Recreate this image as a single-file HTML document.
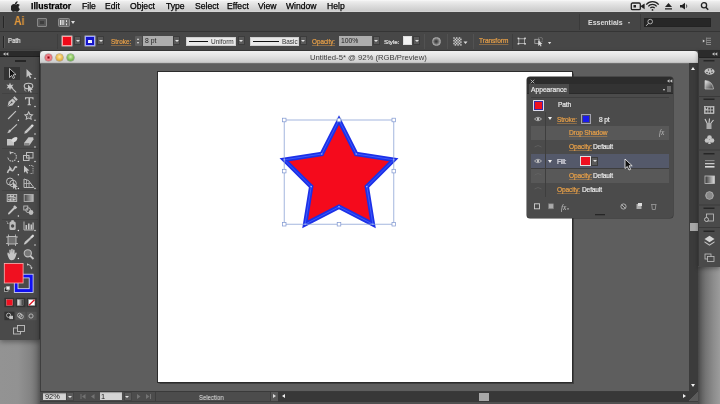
<!DOCTYPE html>
<html><head><meta charset="utf-8">
<style>
*{margin:0;padding:0;box-sizing:border-box}
html,body{width:720px;height:404px;overflow:hidden;background:#8a8a8a;font-family:"Liberation Sans",sans-serif;-webkit-font-smoothing:antialiased}
.a{position:absolute}
.t{position:absolute;white-space:nowrap;will-change:transform}
#menubar{left:0;top:0;width:720px;height:12px;background:linear-gradient(#fafafa 0,#ededed 12%,#dedede 45%,#d0d0d0 80%,#cdcdcd 90%,#d8d8d8 100%)}
.mi{position:absolute;will-change:transform;top:0.8px;font-size:8.6px;line-height:10px;color:#000;-webkit-text-stroke:0.25px #000}
#appbar{left:0;top:12px;width:720px;height:20px;background:#454545;border-bottom:1px solid #353535}
#ctrl{left:0;top:32px;width:720px;height:19px;background:#474747;border-bottom:1px solid #383838}
#desk{left:0;top:12px;width:720px;height:392px;background:#969696}
#tools{left:0;top:50px;width:40px;height:289.5px;background:#4a4a4a;box-shadow:0 2px 5px rgba(0,0,0,0.35)}
#docwin{left:40px;top:51px;width:658px;height:360px;background:#5e5e5e;box-shadow:0 3px 6px 0 rgba(0,0,0,0.4)}
#dock{left:698px;top:50px;width:22px;height:216.7px;background:#4a4a4a;box-shadow:0 2px 4px rgba(0,0,0,0.3)}
.dd{position:absolute;width:7px;height:9px;background:#5a5a5a;border:1px solid #3c3c3c}
.dd:after{content:"";position:absolute;left:0.5px;top:2.8px;border-left:2px solid transparent;border-right:2px solid transparent;border-top:2.5px solid #e0e0e0}
.ct.ot{color:#e8a048;text-decoration:underline;text-underline-offset:1px;text-decoration-thickness:0.6px;text-decoration-color:rgba(220,150,70,0.45)}
.ct{font-size:6.6px;line-height:8px;color:#e4e4e4;-webkit-text-stroke:0.2px}
.sep{position:absolute;width:1px;background:#3a3a3a;border-right:1px solid #525252}
</style></head><body>
<div class="a" id="desk"></div>
<div class="a" style="left:698px;top:50px;width:22px;height:354px;background:linear-gradient(90deg,#585858,#747474 35%,#8c8c8c 70%,#9c9c9c)"></div>
<div class="a" style="left:0;top:339px;width:40px;height:65px;background:linear-gradient(90deg,#939393,#929292 45%,#848484 75%,#6a6a6a)"></div>

<!-- MENU BAR -->
<div class="a" id="menubar">
  <svg class="a" style="left:11px;top:1px" width="10" height="11" viewBox="0 0 10 11"><path d="M6.6 0.3c0.1 0.9-0.3 1.7-0.8 2.2-0.5 0.5-1.2 0.9-1.9 0.8-0.1-0.8 0.3-1.6 0.8-2.1 0.5-0.5 1.3-0.9 1.9-0.9zM8.9 7.9c-0.3 0.7-0.5 1-0.9 1.6-0.5 0.8-1.3 1.4-2.1 1.3-0.7 0-0.9-0.4-1.8-0.4-0.9 0-1.1 0.4-1.8 0.4-0.8 0-1.5-0.7-2-1.5C-0.8 7.4-0.3 4.7 1 3.7c0.6-0.5 1.4-0.7 2-0.7 0.8 0 1.3 0.5 1.9 0.5 0.6 0 1-0.5 1.9-0.5 0.6 0 1.4 0.3 2 1-1.7 0.9-1.5 3.4 0.1 3.9z" fill="#222"/></svg>
  <div class="mi" style="left:30.5px;font-weight:bold;font-size:8.7px">Illustrator</div>
  <div class="mi" style="left:82px">File</div>
  <div class="mi" style="left:105px">Edit</div>
  <div class="mi" style="left:130px">Object</div>
  <div class="mi" style="left:165.5px">Type</div>
  <div class="mi" style="left:194.5px">Select</div>
  <div class="mi" style="left:226.5px">Effect</div>
  <div class="mi" style="left:258px">View</div>
  <div class="mi" style="left:286px">Window</div>
  <div class="mi" style="left:326.5px">Help</div>
  <!-- status icons -->
  <svg class="a" style="left:630px;top:1px" width="80" height="10" viewBox="0 0 80 10">
    <rect x="1.3" y="2" width="9" height="6.6" rx="1.2" fill="none" stroke="#222" stroke-width="1.3"/>
    <rect x="3.5" y="4" width="2.5" height="2.5" fill="#222"/>
    <path d="M10.3 5.3 L14.6 2.4 V8.2 Z" fill="#222"/>
    <path d="M16.3 3.6 A8 8 0 0 1 28.7 3.6" fill="none" stroke="#222" stroke-width="1.3"/>
    <path d="M18.3 5.4 A5.3 5.3 0 0 1 26.7 5.4" fill="none" stroke="#222" stroke-width="1.3"/>
    <path d="M20.3 7.1 A2.8 2.8 0 0 1 24.7 7.1" fill="none" stroke="#222" stroke-width="1.3"/>
    <circle cx="22.5" cy="8.9" r="0.9" fill="#222"/>
    <path d="M35 6 L38.5 2 L42 6 Z M35 7.2 H42 V8.4 H35 Z" fill="#222"/>
    <path d="M50 4 H52 L55 1.8 V8.4 L52 6.4 H50 Z" fill="#222"/><path d="M56.3 3.5 Q57.3 5.1 56.3 6.7" fill="none" stroke="#222" stroke-width="0.8"/>
    <circle cx="74" cy="4.3" r="2.6" fill="none" stroke="#222" stroke-width="1.3"/>
    <path d="M75.8 6.2 L78.2 8.7" stroke="#222" stroke-width="1.5"/>
  </svg>
</div>

<!-- APP BAR -->
<div class="a" id="appbar">
  <div class="a" style="left:3px;top:4px;width:2px;height:12px;background:#262626;border-right:1px solid #4a4a4a"></div>
  <div class="t" style="left:14px;top:3.4px;font-size:12.2px;line-height:13px;font-weight:bold;color:#e3983a;transform:scaleX(0.86);transform-origin:0 0">Ai</div>
  <div class="a" style="left:36.8px;top:5.8px;width:9.8px;height:9.2px;background:#555;border:1.2px solid #888;border-radius:1px;box-shadow:inset 0 0 1px #777"></div><div class="a" style="left:39.5px;top:8.5px;width:4px;height:3.5px;background:#3e3e3e"></div>
  <div class="a" style="left:58.4px;top:5.8px;width:11.3px;height:9.2px;background:#6a6a6a;border:1.2px solid #8c8c8c;border-radius:1.5px"></div>
  <div class="a" style="left:60.3px;top:7.5px;width:0.9px;height:5.5px;background:#e8e8e8;box-shadow:1.6px 0 #e8e8e8,3.2px 0 #ccc"></div><div class="a" style="left:65.5px;top:7.8px;width:1.8px;height:1.8px;background:#e8e8e8;border-radius:50%;box-shadow:0 3.2px #e8e8e8"></div>
  <div class="a" style="left:71px;top:9px;border-left:2px solid transparent;border-right:2px solid transparent;border-top:3px solid #ddd"></div>
  <div class="a" style="left:579px;top:2px;width:1px;height:16px;background:#3a3a3a"></div>
  <div class="t" style="left:587.5px;top:5.8px;font-size:7px;line-height:9px;font-weight:bold;color:#dcdcdc">Essentials</div>
  <div class="a" style="left:628px;top:9.5px;border-left:1.5px solid transparent;border-right:1.5px solid transparent;border-top:2px solid #ccc"></div>
  <div class="a" style="left:640px;top:2px;width:1px;height:16px;background:#3a3a3a"></div>
  <div class="a" style="left:644px;top:5.7px;width:67px;height:9.5px;background:#272727;border:1px solid #232323"></div>
  <svg class="a" style="left:645px;top:6px" width="9" height="9" viewBox="0 0 9 9"><circle cx="5.2" cy="3.6" r="2.3" fill="none" stroke="#bbb" stroke-width="0.9"/><path d="M3.6 5.2 L1.2 7.8" stroke="#bbb" stroke-width="1"/></svg>
</div>

<!-- CONTROL BAR -->
<div class="a" id="ctrl">
  <div class="a" style="left:3px;top:3.5px;width:2px;height:12px;background:#262626;border-right:1px solid #555"></div>
  <div class="t ct" style="left:7.8px;top:5px;font-size:6.7px;transform:scaleX(0.9);transform-origin:0 0">Path</div>
  <div class="a" style="left:57px;top:2px;width:1px;height:15px;background:#3e3e3e"></div>
  <div class="a" style="left:62px;top:4.3px;width:10px;height:10px;background:#f00818;border:0.9px solid #ffa0a0;box-shadow:0 0 0 0.4px #ddd"></div>
  <div class="dd" style="left:74px;top:4.2px"></div>
  <div class="a" style="left:85px;top:4.3px;width:10px;height:10px;background:#1414c8;border:0.9px solid #a0a8ff;box-shadow:0 0 0 0.4px #ccc"></div>
  <div class="a" style="left:88.2px;top:7.5px;width:3.6px;height:3.6px;background:#e8ecff;border:0.5px dotted #fff;border-radius:0.5px"></div>
  <div class="dd" style="left:97px;top:4.2px"></div>
  <div class="t ct ot" style="left:111px;top:5.5px;font-size:6.4px">Stroke:</div>
  <div class="a" style="left:135px;top:4.3px;width:7px;height:4.5px;background:#5c5c5c;border-radius:1px"></div>
  <div class="a" style="left:135px;top:9.2px;width:7px;height:4.5px;background:#5c5c5c;border-radius:1px"></div>
  <div class="a" style="left:136.6px;top:5.5px;border-left:1.9px solid transparent;border-right:1.9px solid transparent;border-bottom:2.2px solid #e0e0e0"></div>
  <div class="a" style="left:136.6px;top:10.3px;border-left:1.9px solid transparent;border-right:1.9px solid transparent;border-top:2.2px solid #e0e0e0"></div>
  <div class="a" style="left:143px;top:4.2px;width:29.5px;height:9.5px;background:#adadad"></div>
  <div class="t ct" style="left:145px;top:5.3px;color:#222;font-size:6.8px;-webkit-text-stroke:0">8 pt</div>
  <div class="dd" style="left:173px;top:4.2px"></div>
  <div class="a" style="left:186px;top:4.7px;width:50px;height:9.2px;background:#e8e8e8;border:0.5px solid #cfcfcf"></div>
  <div class="a" style="left:189px;top:8.6px;width:19px;height:1.5px;background:#111"></div>
  <div class="t ct" style="left:210.8px;top:5.6px;color:#333;font-size:6.5px;-webkit-text-stroke:0">Uniform</div>
  <div class="dd" style="left:237.5px;top:4.2px"></div>
  <div class="a" style="left:250px;top:4.7px;width:48.5px;height:9.2px;background:#e8e8e8;border:0.5px solid #cfcfcf"></div>
  <div class="a" style="left:253px;top:8.6px;width:26px;height:1.5px;background:#111"></div>
  <div class="t ct" style="left:281.7px;top:5.6px;color:#333;font-size:6.4px;-webkit-text-stroke:0">Basic</div>
  <div class="dd" style="left:299.5px;top:4.2px"></div>
  <div class="t ct ot" style="left:311.5px;top:5.5px;font-size:6.3px">Opacity:</div>
  <div class="a" style="left:339px;top:4.2px;width:33px;height:9.5px;background:#adadad"></div>
  <div class="t ct" style="left:340.5px;top:5.3px;color:#222;font-size:6.8px;-webkit-text-stroke:0">100%</div>
  <div class="dd" style="left:372.5px;top:4.2px"></div>
  <div class="t ct" style="left:384px;top:5.5px;color:#e0e0e0;font-size:6.2px">Style:</div>
  <div class="a" style="left:402.5px;top:4.2px;width:9.5px;height:9.3px;background:#f2f2f2;border:0.6px solid #ddd"></div>
  <div class="dd" style="left:413px;top:4.2px"></div>
  <div class="sep" style="left:424px;top:2px;height:15px"></div>
  <div class="a" style="left:431.8px;top:4.8px;width:8.8px;height:8.8px;border-radius:50%;background:radial-gradient(circle at 45% 50%,#333 0,#555 30%,#999 70%,#777);border:0.8px solid #aaa"></div>
  <div class="sep" style="left:447px;top:2px;height:15px"></div>
  <svg class="a" style="left:453px;top:4.5px" width="16" height="10" viewBox="0 0 16 10"><rect x="0.3" y="0.3" width="8.4" height="8.4" fill="#555"/><g fill="#d0d0d0"><rect x="0.3" y="0.3" width="1.4" height="1.4"/><rect x="3" y="0.3" width="1.4" height="1.4"/><rect x="5.8" y="0.3" width="1.4" height="1.4"/><rect x="1.7" y="1.7" width="1.4" height="1.4"/><rect x="4.4" y="1.7" width="1.4" height="1.4"/><rect x="7.2" y="1.7" width="1.4" height="1.4"/><rect x="0.3" y="3" width="1.4" height="1.4"/><rect x="3" y="3" width="1.4" height="1.4"/><rect x="5.8" y="3" width="1.4" height="1.4"/><rect x="1.7" y="4.4" width="1.4" height="1.4"/><rect x="4.4" y="4.4" width="1.4" height="1.4"/><rect x="7.2" y="4.4" width="1.4" height="1.4"/><rect x="0.3" y="5.8" width="1.4" height="1.4"/><rect x="3" y="5.8" width="1.4" height="1.4"/><rect x="5.8" y="5.8" width="1.4" height="1.4"/><rect x="1.7" y="7.2" width="1.4" height="1.4"/><rect x="4.4" y="7.2" width="1.4" height="1.4"/><rect x="7.2" y="7.2" width="1.4" height="1.4"/></g><path d="M10.5 4.5 L14.5 4.5 L12.5 7Z" fill="#ddd"/></svg>
  <div class="sep" style="left:473px;top:2px;height:15px"></div>
  <div class="t ct ot" style="left:478.5px;top:5.2px;font-size:6.5px">Transform</div>
  <div class="a" style="left:511.5px;top:2px;width:1px;height:15px;background:#3e3e3e"></div>
  <svg class="a" style="left:517px;top:4.5px" width="10" height="9" viewBox="0 0 10 9"><rect x="1.8" y="1.8" width="5.8" height="4.6" fill="none" stroke="#bbb" stroke-width="0.8"/><g fill="#ddd"><rect x="0.6" y="0.6" width="1.6" height="1.6"/><rect x="7.2" y="0.6" width="1.6" height="1.6"/><rect x="0.6" y="6" width="1.6" height="1.6"/><rect x="7.2" y="6" width="1.6" height="1.6"/></g></svg>
  <svg class="a" style="left:534px;top:4.5px" width="18" height="10" viewBox="0 0 18 10"><rect x="0.8" y="2.3" width="4.5" height="4.2" fill="none" stroke="#aaa" stroke-width="0.8"/><rect x="4.5" y="0.6" width="3.8" height="3.8" fill="none" stroke="#999" stroke-width="0.7" stroke-dasharray="0.8 0.6"/><path d="M4.2 3.2 L4.2 9 L5.6 7.7 L6.7 9.6 L7.6 9.1 L6.6 7.2 L8.5 7.1Z" fill="#d8d8d8"/><path d="M14 5 L17.2 5 L15.6 7.2Z" fill="#e0e0e0"/></svg>
  <svg class="a" style="left:702px;top:3.6px" width="10" height="10" viewBox="0 0 10 10"><path d="M0.8 3.6 L3 5 L0.8 6.4Z" fill="#d0d0d0"/><rect x="4.5" y="1.8" width="4.5" height="0.7" fill="#aaa"/><rect x="4.5" y="3.9" width="4.5" height="0.7" fill="#aaa"/><rect x="4.5" y="6" width="4.5" height="0.7" fill="#aaa"/><rect x="4.5" y="8.1" width="4.5" height="0.7" fill="#aaa"/><rect x="4.2" y="1.5" width="0.6" height="7.5" fill="#999"/></svg>
</div>


<!-- TOOLS PANEL -->
<div class="a" id="tools">
  <div class="a" style="left:0;top:0;width:40px;height:1.2px;background:#474747"></div><div class="a" style="left:0;top:1.2px;width:40px;height:6.3px;background:#2b2b2b;border-bottom:1px solid #1f1f1f"></div>
  <svg class="a" style="left:2.5px;top:2px" width="6" height="4" viewBox="0 0 6 4"><path d="M0 2 L2.5 0.3 V3.7Z M2.8 2 L5.3 0.3 V3.7Z" fill="#c0c0c0"/></svg>
  <div class="a" style="left:39px;top:7px;width:1px;height:282px;background:#383838"></div>
  <div class="a" style="left:14.5px;top:10px;width:11px;height:1.6px;background:#262626"></div>
  <div class="a" style="left:4px;top:17px;width:16px;height:13px;background:#343434"></div>
  <div class="a" style="left:2px;top:43px;width:36px;height:1px;background:#424242"></div>
  <div class="a" style="left:2px;top:98px;width:36px;height:1px;background:#424242"></div>
  <div class="a" style="left:2px;top:140px;width:36px;height:1px;background:#424242"></div>
  <div class="a" style="left:2px;top:168.5px;width:36px;height:1px;background:#424242"></div>
  <svg class="a" style="left:0;top:0" width="40" height="289" viewBox="0 50 40 289">
   <g fill="#c4c4c4" stroke="none">
    <!-- selection -->
    <path d="M9.5 68.5 L9.5 77.5 L11.7 75.4 L13.2 78.5 L14.6 77.8 L13.1 74.8 L16 74.6Z" fill="#111" stroke="#d8d8d8" stroke-width="0.8"/>
    <!-- direct selection -->
    <path d="M26.5 69 L26.5 77.5 L28.5 75.6 L30 78.5 L31.3 77.8 L29.9 75 L32.5 74.8Z"/>
    <!-- magic wand -->
    <path d="M10 82.5 L11 85 L13.5 84.5 L12 86.5 L13.5 88.5 L11 88 L10 90.5 L9 88 L6.5 88.5 L8 86.5 L6.5 84.5 L9 85Z"/>
    <path d="M11.5 87 L16.5 92 L15.8 92.7 L10.8 87.7Z"/>
    <!-- lasso -->
    <ellipse cx="28.5" cy="86" rx="4.3" ry="2.8" fill="none" stroke="#c4c4c4" stroke-width="1.1"/>
    <path d="M28 84.5 L28 92 L29.5 90.5 L30.7 92.8 L31.8 92.2 L30.7 90 L32.8 89.8Z"/>
    <path d="M25 88 Q24 90.5 26 91.5" fill="none" stroke="#c4c4c4" stroke-width="0.9"/>
    <!-- pen -->
    <path d="M7.6 106.4 L8.6 101.8 L12.6 98.6 L15.6 101.6 L12.4 105.6Z"/>
    <path d="M13 97.8 L14.6 96.2 L17.8 99.4 L16.2 101Z"/>
    <path d="M7.8 106.2 L11.2 102.8" stroke="#4a4a4a" stroke-width="0.6"/>
    <circle cx="11.6" cy="102.4" r="0.9" fill="#4a4a4a"/>
    <!-- type T -->
    <path d="M25 97.2 H33.5 V99.5 H32.8 Q32.6 98.3 31.6 98.3 H30 V104 L31 104.5 V105.2 H27.5 V104.5 L28.5 104 V98.3 H27 Q25.9 98.3 25.7 99.5 H25Z"/>
    <!-- line -->
    <path d="M15.5 110.8 L16.3 111.6 L8.5 119.4 L7.7 118.6Z"/>
    <!-- star -->
    <path d="M28.7 110.8 L30.3 114 L33.6 114.4 L31.2 116.8 L31.8 120 L28.7 118.5 L25.6 120 L26.2 116.8 L23.8 114.4 L27.1 114Z"/>
    <path d="M28.7 113 L29.6 115 L31.6 115.2 L30.1 116.6 L30.5 118.4 L28.7 117.4 L26.9 118.4 L27.3 116.6 L25.8 115.2 L27.8 115Z" fill="#5a5a5a"/>
    <!-- brush -->
    <path d="M16.5 124 L17.3 124.8 L11.5 130.3 L10.7 129.5Z"/>
    <path d="M10.5 129.5 L11.5 130.5 Q10.5 133 7 133.2 Q8.5 132 8.5 130.8 Q9 129.5 10.5 129.5Z"/>
    <!-- pencil -->
    <path d="M31.5 124.8 L33.2 126.5 L26.8 132.9 L24.2 133.8 L25.1 131.2Z"/>
    <circle cx="32.3" cy="125.6" r="1.2" fill="#e0e0e0"/>
    <!-- blob brush -->
    <path d="M7 139 L11 139 L14 141 L14 145.5 L7 145.5Z"/>
    <path d="M11 140.5 Q12.5 137 16.5 137 L17.5 138 Q17 141.5 13.5 142.5Z" fill="#dadada"/>
    <!-- eraser -->
    <path d="M28.5 137.2 L33.2 137.2 L33.5 139.5 L29.5 145.3 L24.2 145.3 L24 143Z"/>
    <path d="M24.2 143 L29.3 143 L29.5 145.3 L24.2 145.3Z" fill="#888"/>
    <!-- rotate -->
    <path d="M12 152.5 A4.3 4.3 0 1 1 7.8 157" fill="none" stroke="#bdbdbd" stroke-width="1.1" stroke-dasharray="1.6 0.8"/>
    <path d="M9.5 151.2 L12.5 152.5 L10 154.5Z"/>
    <!-- scale -->
    <rect x="23.5" y="155.5" width="5.5" height="5" fill="none" stroke="#bdbdbd" stroke-width="1"/>
    <rect x="26.5" y="152.5" width="6.5" height="5.5" fill="none" stroke="#bdbdbd" stroke-width="1"/>
    <!-- warp -->
    <path d="M7.5 173 Q9 168 11 170 Q13 172 14.5 168 Q15.5 166 17 167.5" fill="none" stroke="#c4c4c4" stroke-width="1.6"/>
    <path d="M9 165.5 L12 169 L9.5 171Z"/>
    <!-- free transform -->
    <path d="M24 165.5 L24 172.8 L25.8 171.2 L27 173.7 L28.2 173.1 L27.1 170.7 L29.4 170.6Z"/>
    <path d="M29 165.5 H33 V173.5 H29.5" fill="none" stroke="#bdbdbd" stroke-width="0.9" stroke-dasharray="1.2 1"/>
    <!-- shape builder -->
    <circle cx="10" cy="181.5" r="3.5" fill="none" stroke="#bdbdbd" stroke-width="1"/>
    <circle cx="13" cy="183.5" r="3.3" fill="none" stroke="#bdbdbd" stroke-width="1"/>
    <path d="M13 182 L13 189 L14.6 187.6 L15.7 189.8 L16.8 189.2 L15.8 187 L17.8 186.9Z"/>
    <!-- perspective grid -->
    <path d="M24 179 L28.5 180.5 L33.8 187.5 L24 187.5Z" fill="none" stroke="#bdbdbd" stroke-width="1"/>
    <path d="M26.5 179.8 V187.5 M29 181.5 V187.5 M24 183.5 H31" fill="none" stroke="#bdbdbd" stroke-width="0.8"/>
    <!-- mesh -->
    <rect x="7.2" y="194.5" width="9.5" height="7" fill="#666" stroke="#c0c0c0" stroke-width="0.9"/>
    <path d="M8 197 Q12 195 16 198 M8 199.5 Q12 201 16 199 M10.5 195 Q12 198 10 201 M13.5 195 Q12 198 14 201" fill="none" stroke="#d8d8d8" stroke-width="0.8"/>
    <!-- gradient -->
    <rect x="24.2" y="194.5" width="9" height="7" fill="url(#gr)" stroke="#b0b0b0" stroke-width="0.9"/>
    <!-- eyedropper -->
    <path d="M15.8 206.2 L17.2 207.6 L15.6 209.2 L15.1 208.7 L10 213.8 Q9 214.8 8.2 214.2 Q7.6 213.4 8.6 212.4 L13.7 207.3 L13.2 206.8 L14.8 205.2Z"/>
    <!-- blend -->
    <rect x="23.8" y="206" width="4" height="4" fill="none" stroke="#bdbdbd" stroke-width="0.9"/>
    <circle cx="28.2" cy="210.2" r="2.4" fill="none" stroke="#bdbdbd" stroke-width="0.9"/>
    <circle cx="31" cy="212.5" r="2.4" fill="#bdbdbd"/>
    <!-- symbol sprayer -->
    <rect x="9.5" y="221.5" width="6.2" height="8.5" rx="1.5" fill="#bdbdbd"/>
    <circle cx="12.6" cy="226" r="1.7" fill="#4a4a4a"/>
    <rect x="11.3" y="220.3" width="2.5" height="1.5" fill="#cfcfcf"/>
    <path d="M6.5 221.5 L8 222.5 M7 223.5 H8.5" stroke="#bdbdbd" stroke-width="0.7"/>
    <!-- column graph -->
    <path d="M24 221.5 V230 H33.5" fill="none" stroke="#bdbdbd" stroke-width="0.9"/>
    <rect x="25.5" y="225" width="1.6" height="4.5"/><rect x="28" y="223.5" width="1.6" height="6"/><rect x="30.5" y="224.5" width="1.6" height="5"/><rect x="32.5" y="222.5" width="1.2" height="7"/>
    <!-- artboard -->
    <rect x="8" y="236.5" width="8" height="7.5" fill="#707070" stroke="#c4c4c4" stroke-width="0.9"/>
    <path d="M6 237 H8 M16 237 H18 M6 243.5 H8 M16 243.5 H18 M8.5 234.5 V236.5 M15.5 234.5 V236.5 M8.5 244 V246 M15.5 244 V246" stroke="#c4c4c4" stroke-width="0.8"/>
    <!-- slice -->
    <path d="M33 234.5 L34 236 L27 243 Q25.5 244.5 23.8 244.5 Q24.2 242.5 25.5 241.3Z"/>
    <path d="M30.5 236.5 L33 234.5 L34 236 L31.8 238.2Z" fill="#dcdcdc"/>
    <g transform="translate(0,1.8)"><!-- hand -->
    <path d="M7.5 253 Q7 251 8 250.5 L9.5 252.5 L9.3 248.2 Q10 247.3 10.7 248.2 L11 251.5 L11.2 247.3 Q12 246.5 12.7 247.3 L12.8 251.5 L13.2 248 Q14 247.3 14.6 248.2 L14.6 252.5 L15.6 250.8 Q16.5 250.5 16.8 251.3 L15.6 255 Q14.5 258.5 11.5 258.5 Q9 258.5 7.5 253Z"/>
    <!-- zoom -->
    <circle cx="27.8" cy="251.5" r="3.6" fill="#777" stroke="#bdbdbd" stroke-width="1.1"/>
    <path d="M30.3 254 L33.5 257.2" stroke="#c8c8c8" stroke-width="1.8"/>
    </g>
    <!-- corner dots -->
    <g fill="#e8e8e8">
     <circle cx="35" cy="78.6" r="0.75"/><circle cx="18.4" cy="106.6" r="0.75"/><circle cx="35" cy="106.6" r="0.75"/>
     <circle cx="18.4" cy="120.3" r="0.75"/><circle cx="35" cy="120.3" r="0.75"/><circle cx="35" cy="134" r="0.75"/>
     <circle cx="35" cy="147" r="0.75"/><circle cx="18.4" cy="161.5" r="0.75"/><circle cx="35" cy="161.5" r="0.75"/>
     <circle cx="18.4" cy="174.8" r="0.75"/><circle cx="18.4" cy="188.5" r="0.75"/><circle cx="35" cy="188.5" r="0.75"/>
     <circle cx="18.4" cy="216" r="0.75"/><circle cx="18.4" cy="230.5" r="0.75"/><circle cx="35" cy="230.5" r="0.75"/>
     <circle cx="35" cy="245" r="0.75"/><circle cx="18.4" cy="258.5" r="0.75"/>
    </g>
   </g>
   <defs><linearGradient id="gr" x1="0" x2="1"><stop offset="0" stop-color="#444"/><stop offset="1" stop-color="#bbb"/></linearGradient>
   <linearGradient id="gr2" x1="0" x2="1"><stop offset="0" stop-color="#fff"/><stop offset="1" stop-color="#222"/></linearGradient></defs>
   <!-- fill/stroke -->
   <rect x="14.3" y="274.2" width="18.8" height="18.2" fill="#1010f0" stroke="#dde0ff" stroke-width="0.8"/>
   <rect x="18" y="277.9" width="11.2" height="10.8" fill="#4a4a4a" stroke="#dde0ff" stroke-width="0.8"/>
   <rect x="4.3" y="263.5" width="18.8" height="19.5" fill="#f01020" stroke="#ffb0b0" stroke-width="0.8"/>
   <path d="M28 264.5 Q31.5 264.5 31.5 268.5" fill="none" stroke="#c8c8c8" stroke-width="0.9"/>
   <path d="M27 263.3 L29 264.5 L27 265.8Z M30.3 267.5 L31.5 269.5 L32.7 267.5Z" fill="#c8c8c8"/>
   <rect x="4.5" y="288" width="3.5" height="3.5" fill="#222" stroke="#ddd" stroke-width="0.6"/>
   <rect x="6.3" y="286.3" width="3.5" height="3.5" fill="#eee" stroke="#999" stroke-width="0.5"/>
   <!-- color mode buttons -->
   <rect x="4.4" y="297.8" width="10" height="9.4" fill="#333"/>
   <rect x="15.5" y="297.8" width="10" height="9.4" fill="#333"/>
   <rect x="26.7" y="297.8" width="10" height="9.4" fill="#333"/>
   <rect x="6.3" y="299.5" width="6.4" height="6" fill="#f01020" stroke="#e0a0a0" stroke-width="0.4"/>
   <rect x="17.3" y="299.5" width="6.4" height="6" fill="url(#gr2)" stroke="#999" stroke-width="0.4"/>
   <rect x="28.5" y="299.5" width="6.4" height="6" fill="#fff" stroke="#999" stroke-width="0.4"/>
   <path d="M29 305.2 L34.5 299.8" stroke="#e01020" stroke-width="1.2"/>
   <!-- draw modes -->
   <rect x="4.4" y="311.7" width="10" height="8.5" fill="#333"/>
   <rect x="15.5" y="311.7" width="10" height="8.5" fill="#555"/>
   <rect x="26.7" y="311.7" width="10" height="8.5" fill="#555"/>
   <g fill="none" stroke="#c8c8c8" stroke-width="0.8">
    <circle cx="8.6" cy="315.3" r="2.1"/><rect x="9.8" y="316.2" width="2.8" height="2.5" fill="#c8c8c8"/>
    <circle cx="19.6" cy="315.3" r="2.1"/><circle cx="21.2" cy="316.6" r="2.1"/>
    <circle cx="31" cy="316" r="2.1"/>
   </g>
   <!-- screen mode -->
   <rect x="13.5" y="328" width="7" height="6" fill="none" stroke="#c0c0c0" stroke-width="0.9"/>
   <rect x="17.5" y="325.5" width="7" height="6" fill="#4a4a4a" stroke="#c0c0c0" stroke-width="0.9"/>
  </svg>
</div>


<!-- DOCUMENT WINDOW -->
<div class="a" id="docwin">
  <div class="a" style="left:0;top:0;width:658px;height:12.6px;background:linear-gradient(#f0f0f0,#e4e4e4 40%,#cfcfcf 90%,#b8b8b8);border-radius:4px 4px 0 0;border-bottom:0.6px solid #707070"></div>
  <div class="a" style="left:5px;top:2.5px;width:7px;height:7px;border-radius:50%;background:radial-gradient(circle at 50% 50%,#8a0010 0,#b02030 14%,#f08a90 40%,#e06068 70%,#b84850);box-shadow:0 0 0 0.5px #a08080"></div>
  <div class="a" style="left:16px;top:2.5px;width:7px;height:7px;border-radius:50%;background:radial-gradient(circle at 50% 40%,#ffe8a8,#e8b848 55%,#b08030);box-shadow:0 0 0 0.5px #a08a60"></div>
  <div class="a" style="left:27px;top:2.5px;width:7px;height:7px;border-radius:50%;background:radial-gradient(circle at 50% 40%,#d0f0b0,#80c058 55%,#508838);box-shadow:0 0 0 0.5px #70906a"></div>
  <div class="t" style="left:269.5px;top:1.6px;font-size:7.7px;line-height:9px;color:#3c3c3c">Untitled-5* @ 92% (RGB/Preview)</div>
  <div class="a" style="left:0;top:12.6px;width:1px;height:348px;background:#3e3e3e"></div>
  <!-- artboard -->
  <div class="a" style="left:117.3px;top:20px;width:415.5px;height:312px;background:#fff;border:1.2px solid #2c2c2c;box-shadow:0.5px 0.5px 1px rgba(0,0,0,0.3)"></div>
  <!-- vscroll -->
  <div class="a" style="left:649px;top:12px;width:9px;height:328px;background:#3b3b3b"></div>
  <div class="a" style="left:650.8px;top:15.8px;border-left:2.9px solid transparent;border-right:2.9px solid transparent;border-bottom:3.4px solid #f0f0f0"></div>
  <div class="a" style="left:650.8px;top:333.3px;border-left:2.9px solid transparent;border-right:2.9px solid transparent;border-top:3.4px solid #f0f0f0"></div>
  <div class="a" style="left:650px;top:172px;width:8px;height:8px;background:#a8a8a8"></div>
  <!-- status bar -->
  <div class="a" style="left:0;top:340px;width:658px;height:10px;background:#4c4c4c;border-top:1px solid #3a3a3a"></div>
  <div class="a" style="left:0;top:350px;width:658px;height:10px;background:#505050;border-top:1px solid #3e3e3e"></div>
  <div class="a" style="left:3px;top:341.5px;width:23px;height:7.8px;background:#d4d4d4;box-shadow:inset 0 1px 1px #999"></div>
  <div class="t" style="left:4.5px;top:341.3px;font-size:7.4px;line-height:9px;color:#1a1a1a">92%</div>
  <div class="dd" style="left:26px;top:341.2px;height:8.5px;width:8px;background:#5a5a5a;border-color:#444"></div>
  <svg class="a" style="left:38px;top:342px" width="120" height="7" viewBox="0 0 120 7"><g fill="#737373"><rect x="2.5" y="1" width="1" height="5"/><path d="M7.5 1 V6 L4 3.5Z"/><path d="M16.5 1 V6 L13 3.5Z"/><path d="M59 1 V6 L62.5 3.5Z"/><path d="M68 1 V6 L71.5 3.5Z"/><rect x="72" y="1" width="1" height="5"/></g></svg>
  <div class="a" style="left:59.5px;top:341.3px;width:22.5px;height:8px;background:#d4d4d4;box-shadow:inset 0 1px 1px #999"></div>
  <div class="t" style="left:61px;top:341.3px;font-size:7.4px;line-height:9px;color:#1a1a1a">1</div>
  <div class="dd" style="left:83.5px;top:341.2px;height:8.5px;width:8px;background:#5a5a5a;border-color:#444"></div>
  <div class="a" style="left:114.5px;top:340.5px;width:1px;height:9.5px;background:#3e3e3e"></div>
  <div class="t" style="left:158.6px;top:341.6px;font-size:6.8px;line-height:9px;color:#e4e4e4;transform:scaleX(0.88);transform-origin:0 0">Selection</div>
  <div class="a" style="left:229.5px;top:340.5px;width:1px;height:9.5px;background:#3e3e3e"></div>
  <div class="a" style="left:230.5px;top:341px;width:7px;height:9px;background:#585858"></div>
  <div class="a" style="left:232.5px;top:343px;border-top:2.5px solid transparent;border-bottom:2.5px solid transparent;border-left:3px solid #ddd"></div>
  <div class="a" style="left:238px;top:341px;width:411px;height:9.5px;background:#383838"></div>
  <div class="a" style="left:241.5px;top:343px;border-top:2.6px solid transparent;border-bottom:2.6px solid transparent;border-right:3.2px solid #f0f0f0"></div>
  <div class="a" style="left:439px;top:342px;width:9.5px;height:7.5px;background:#a8a8a8"></div>
  <div class="a" style="left:642.5px;top:343px;border-top:2.6px solid transparent;border-bottom:2.6px solid transparent;border-left:3.2px solid #f0f0f0"></div>
  <div class="a" style="left:649px;top:340px;width:9px;height:10px;background:linear-gradient(135deg,#3a3a3a 50%,#5a5a5a 50%)"></div>
</div>


<!-- STAR -->
<svg class="a" style="left:0;top:0" width="720" height="404" viewBox="0 0 720 404">
  <polygon points="339.0,120.0 356.2,154.0 393.8,159.8 366.8,186.6 372.9,224.2 339.0,206.8 305.1,224.2 311.2,186.6 284.2,159.8 321.8,154.0" fill="#f50a1c" stroke="#1c30e8" stroke-width="4.4" stroke-linejoin="miter" stroke-miterlimit="10"/>
  <polygon points="339.0,120.0 356.2,154.0 393.8,159.8 366.8,186.6 372.9,224.2 339.0,206.8 305.1,224.2 311.2,186.6 284.2,159.8 321.8,154.0" fill="none" stroke="#4a6cff" stroke-width="0.7"/>
  <rect x="284.2" y="120" width="109.6" height="104.2" fill="none" stroke="#8da3d6" stroke-width="0.8"/>
  <g fill="#fff" stroke="#7e96d0" stroke-width="0.7">
    <rect x="282.4" y="118.2" width="3.6" height="3.6"/><rect x="337.2" y="118.2" width="3.6" height="3.6"/><rect x="392" y="118.2" width="3.6" height="3.6"/>
    <rect x="282.4" y="169.3" width="3.6" height="3.6"/><rect x="392" y="169.3" width="3.6" height="3.6"/>
    <rect x="282.4" y="222.4" width="3.6" height="3.6"/><rect x="337.2" y="222.4" width="3.6" height="3.6"/><rect x="392" y="222.4" width="3.6" height="3.6"/>
  </g>
  <g fill="#9ab0ff">
    <circle cx="356.2" cy="154" r="0.8"/><circle cx="393.8" cy="159.8" r="0.8"/><circle cx="366.8" cy="186.6" r="0.8"/><circle cx="372.9" cy="224.2" r="0.8"/><circle cx="339" cy="206.8" r="0.8"/><circle cx="305.1" cy="224.2" r="0.8"/><circle cx="311.2" cy="186.6" r="0.8"/><circle cx="284.2" cy="159.8" r="0.8"/><circle cx="321.8" cy="154" r="0.8"/>
  </g>
</svg>


<!-- RIGHT DOCK -->
<div class="a" id="dock">
  <div class="a" style="left:0;top:0;width:22px;height:7.5px;background:#2b2b2b;border-bottom:1px solid #222"></div>
  <svg class="a" style="left:13.8px;top:2.3px" width="6" height="4" viewBox="0 0 6 4"><path d="M0 2 L2.5 0.3 V3.7Z M2.8 2 L5.3 0.3 V3.7Z" fill="#c0c0c0"/></svg>
  <div class="a" style="left:0;top:7px;width:1px;height:209px;background:#383838"></div>
  <svg class="a" style="left:0;top:0" width="22" height="216" viewBox="698 50 22 216">
   <g fill="#3a3a3a"><rect x="698" y="96" width="22" height="1"/><rect x="698" y="149.5" width="22" height="1"/><rect x="698" y="204.5" width="22" height="1"/><rect x="698" y="227" width="22" height="1"/></g>
   <g fill="#262626"><rect x="703.5" y="60" width="11" height="1.5"/><rect x="703.5" y="98.5" width="11" height="1.5"/><rect x="703.5" y="153" width="11" height="1.5"/><rect x="703.5" y="207.5" width="11" height="1.5"/><rect x="703.5" y="230.5" width="11" height="1.5"/></g>
   <!-- color palette -->
   <ellipse cx="709.5" cy="71.5" rx="5" ry="3.2" fill="#c4c4c4"/>
   <g fill="#4a4a4a"><circle cx="707" cy="72.5" r="0.8"/><circle cx="709.5" cy="73.3" r="0.8"/><circle cx="712" cy="72.3" r="0.8"/><circle cx="708.5" cy="70" r="0.7"/><circle cx="711.5" cy="69.8" r="0.8"/></g>
   <!-- guide / gradient quarter -->
   <path d="M705 80.5 Q712.5 81 713.5 89 L705 89Z" fill="url(#dg)" stroke="#c0c0c0" stroke-width="0.8"/>
   <defs><linearGradient id="dg" x1="0" x2="1" y1="0" y2="1"><stop offset="0" stop-color="#eee"/><stop offset="1" stop-color="#333"/></linearGradient>
   <linearGradient id="dg2" x1="0" x2="1"><stop offset="0" stop-color="#333"/><stop offset="1" stop-color="#ddd"/></linearGradient></defs>
   <!-- swatches -->
   <rect x="704.5" y="106.5" width="9.5" height="7" fill="#bbb" stroke="#d0d0d0" stroke-width="0.6"/>
   <g fill="#444"><rect x="705.5" y="110.5" width="2" height="2"/><rect x="708.3" y="110.5" width="2" height="2"/><rect x="711" y="110.5" width="2" height="2"/><rect x="708.3" y="107.5" width="2" height="2"/><rect x="711" y="107.5" width="2" height="2"/></g>
   <path d="M705.5 107.3 L706.5 109.3 L707.5 107.3Z" fill="#222"/>
   <!-- brushes -->
   <rect x="706.5" y="123" width="5" height="6" fill="#aaa"/>
   <path d="M707 123 L705 119 M709 123 L709.5 118.5 M711 123 L713.5 120" stroke="#cfcfcf" stroke-width="1.1"/>
   <!-- symbols club -->
   <circle cx="709.5" cy="137.5" r="2.3" fill="#c4c4c4"/><circle cx="707" cy="140.5" r="2.3" fill="#c4c4c4"/><circle cx="712" cy="140.5" r="2.3" fill="#c4c4c4"/>
   <path d="M708.8 140 L708.2 144 H710.8 L710.2 140Z" fill="#c4c4c4"/>
   <!-- stroke lines -->
   <rect x="705" y="160.2" width="9.5" height="0.9" fill="#999"/><rect x="705" y="163" width="9.5" height="1.3" fill="#c8c8c8"/><rect x="705" y="166" width="9.5" height="1.6" fill="#dadada"/>
   <!-- gradient box -->
   <rect x="705" y="176" width="9.5" height="7.5" fill="url(#dg2)" stroke="#c0c0c0" stroke-width="0.8"/>
   <!-- transparency circle -->
   <circle cx="709.5" cy="195.5" r="3.8" fill="#999" stroke="#c4c4c4" stroke-width="0.8"/>
   <path d="M706.5 193 Q709.5 191 712.5 193.5 L712.5 198 Q709.5 200 706.5 198Z" fill="#777" opacity="0.5"/>
   <!-- appearance -->
   <rect x="706.5" y="214" width="7" height="7" fill="none" stroke="#c4c4c4" stroke-width="0.8"/>
   <circle cx="706.5" cy="219.5" r="2" fill="#4a4a4a" stroke="#d0d0d0" stroke-width="0.8"/>
   <!-- layers -->
   <path d="M709.5 235.8 L714.5 239 L709.5 242.2 L704.5 239Z" fill="#d4d4d4"/>
   <path d="M704.5 241.2 L709.5 244.4 L714.5 241.2 L714.5 242.6 L709.5 245.8 L704.5 242.6Z" fill="#c0c0c0"/>
   
   <!-- artboards -->
   <rect x="705" y="254" width="6" height="5" fill="none" stroke="#c0c0c0" stroke-width="0.8"/>
   <rect x="707.5" y="256.5" width="6.5" height="5" fill="#4a4a4a" stroke="#c0c0c0" stroke-width="0.8"/>
  </svg>
</div>


<!-- APPEARANCE PANEL -->
<div class="a" style="left:527px;top:77px;width:146px;height:141px;background:#4b4b4b;border-radius:3px;overflow:hidden;box-shadow:0 0 0 0.5px #333">
  <div class="a" style="left:0;top:0;width:146px;height:7px;background:#2c2c2c"></div>
  <svg class="a" style="left:3px;top:2px" width="5" height="5" viewBox="0 0 5 5"><path d="M0.7 0.7 L4.3 4.3 M4.3 0.7 L0.7 4.3" stroke="#bbb" stroke-width="0.9"/></svg>
  <svg class="a" style="left:139.5px;top:2px" width="6" height="4" viewBox="0 0 6 4"><path d="M0 2 L2.5 0.3 V3.7Z M2.8 2 L5.3 0.3 V3.7Z" fill="#c0c0c0"/></svg>
  <div class="a" style="left:0;top:7px;width:146px;height:10px;background:#333;border-bottom:1px solid #2a2a2a"></div>
  <div class="a" style="left:1.5px;top:7px;width:40.5px;height:10.5px;background:#4b4b4b"></div>
  <div class="t" style="left:4px;top:8.3px;font-size:6.7px;line-height:9px;color:#e8e8e8;-webkit-text-stroke:0.2px #e8e8e8">Appearance</div>
  <div class="a" style="left:135.5px;top:11.5px;border-left:1.8px solid transparent;border-right:1.8px solid transparent;border-top:2.2px solid #ddd"></div>
  <div class="a" style="left:139.5px;top:9px;width:4.5px;height:6px;background:#666"></div>
  <!-- list -->
  <div class="a" style="left:3.5px;top:20px;width:138.5px;height:104px;background:#3e3e3e"></div>
  <div class="a" style="left:4px;top:21px;width:137.5px;height:13.5px;background:#4b4b4b"></div>
  <div class="a" style="left:4px;top:35px;width:13.8px;height:13.5px;background:#4b4b4b"></div>
  <div class="a" style="left:18.5px;top:35px;width:123px;height:13.5px;background:#4b4b4b"></div>
  <div class="a" style="left:4px;top:49px;width:13.8px;height:13.5px;background:#585858"></div>
  <div class="a" style="left:18.5px;top:49px;width:123px;height:13.5px;background:#585858"></div>
  <div class="a" style="left:4px;top:63px;width:13.8px;height:13.5px;background:#4b4b4b"></div>
  <div class="a" style="left:18.5px;top:63px;width:123px;height:13.5px;background:#4b4b4b"></div>
  <div class="a" style="left:4px;top:77.2px;width:13.8px;height:14px;background:#54596a"></div>
  <div class="a" style="left:18.5px;top:77.2px;width:123px;height:14px;background:#54596a"></div>
  <div class="a" style="left:4px;top:92px;width:13.8px;height:13.5px;background:#585858"></div>
  <div class="a" style="left:18.5px;top:92px;width:123px;height:13.5px;background:#585858"></div>
  <div class="a" style="left:4px;top:106px;width:13.8px;height:13.5px;background:#4b4b4b"></div>
  <div class="a" style="left:18.5px;top:106px;width:123px;height:13.5px;background:#4b4b4b"></div>
  <div class="a" style="left:4px;top:120px;width:137.5px;height:3.5px;background:#4b4b4b"></div>
  <!-- path row -->
  <div class="a" style="left:6.5px;top:23.6px;width:9px;height:9px;background:#f01020;border:1.5px solid #3a2aa8;box-shadow:0 0 0 0.9px #f0f0ff"></div>
  <div class="t" style="left:31px;top:23.4px;font-size:6.6px;line-height:9px;letter-spacing:-0.15px;color:#e8e8e8;-webkit-text-stroke:0.2px #e8e8e8">Path</div>
  <!-- stroke row -->
  <svg class="a" style="left:6.5px;top:38.5px" width="8" height="6" viewBox="0 0 8 6"><path d="M0.5 3 Q4 -0.5 7.5 3 Q4 6.5 0.5 3Z" fill="none" stroke="#c4c4c4" stroke-width="0.8"/><circle cx="4" cy="3" r="1.2" fill="#c4c4c4"/></svg>
  <div class="a" style="left:20.5px;top:40px;border-left:2.2px solid transparent;border-right:2.2px solid transparent;border-top:3.2px solid #eee"></div>
  <div class="t ct ot" style="left:30px;top:37.5px;font-size:6.6px;line-height:9px;letter-spacing:-0.15px">Stroke:</div>
  <div class="a" style="left:54px;top:36.8px;width:10px;height:10px;background:#1a1aee;border:1.3px solid #a4a4b0;box-shadow:inset 0 0 0 1px #4a4a66"></div>
  <div class="t" style="left:72px;top:37.5px;font-size:6.6px;line-height:9px;letter-spacing:-0.15px;color:#e8e8e8;-webkit-text-stroke:0.2px #e8e8e8">8 pt</div>
  <!-- drop shadow row -->
  <div class="t ct ot" style="left:41.5px;top:51.4px;font-size:6.6px;line-height:9px;letter-spacing:-0.15px">Drop Shadow</div>
  <div class="t" style="left:131.5px;top:51px;font-size:7.5px;line-height:9px;color:#bbb;font-family:'Liberation Serif',serif;font-style:italic">fx</div>
  <!-- opacity row -->
  <svg class="a" style="left:6.5px;top:66.5px" width="8" height="6" viewBox="0 0 8 6"><path d="M0.5 3 Q4 0 7.5 3" fill="none" stroke="#666" stroke-width="0.7"/></svg>
  <div class="t ct ot" style="left:41.5px;top:65.4px;font-size:6.6px;line-height:9px;letter-spacing:-0.15px">Opacity:</div>
  <div class="t" style="left:65.7px;top:65.4px;font-size:6.6px;line-height:9px;letter-spacing:-0.15px;color:#e8e8e8;-webkit-text-stroke:0.2px #e8e8e8">Default</div>
  <!-- fill row -->
  <svg class="a" style="left:6.5px;top:81px" width="8" height="6" viewBox="0 0 8 6"><path d="M0.5 3 Q4 -0.5 7.5 3 Q4 6.5 0.5 3Z" fill="none" stroke="#c4c4c4" stroke-width="0.8"/><circle cx="4" cy="3" r="1.2" fill="#c4c4c4"/></svg>
  <div class="a" style="left:20.5px;top:83px;border-left:2.2px solid transparent;border-right:2.2px solid transparent;border-top:3.2px solid #eee"></div>
  <div class="t" style="left:30px;top:79.5px;font-size:6.6px;line-height:9px;letter-spacing:-0.15px;color:#e0e0e8;-webkit-text-stroke:0.2px #e0e0e8">Fill:</div>
  <div class="a" style="left:53px;top:79px;width:10.5px;height:10px;background:#f01020;border:1px solid #e0e0e0"></div>
  <div class="dd" style="left:64px;top:79.5px;width:7px;height:9px;background:#5a5a5a"></div>
  <!-- opacity 2 -->
  <svg class="a" style="left:6.5px;top:95px" width="8" height="6" viewBox="0 0 8 6"><path d="M0.5 3 Q4 0 7.5 3" fill="none" stroke="#666" stroke-width="0.7"/></svg>
  <div class="t ct ot" style="left:41.5px;top:94.0px;font-size:6.6px;line-height:9px;letter-spacing:-0.15px">Opacity:</div>
  <div class="t" style="left:65.7px;top:94.0px;font-size:6.6px;line-height:9px;letter-spacing:-0.15px;color:#e8e8e8;-webkit-text-stroke:0.2px #e8e8e8">Default</div>
  <!-- opacity 3 -->
  <svg class="a" style="left:6.5px;top:109px" width="8" height="6" viewBox="0 0 8 6"><path d="M0.5 3 Q4 0 7.5 3" fill="none" stroke="#666" stroke-width="0.7"/></svg>
  <div class="t ct ot" style="left:30px;top:108.0px;font-size:6.6px;line-height:9px;letter-spacing:-0.15px">Opacity:</div>
  <div class="t" style="left:55px;top:108.0px;font-size:6.6px;line-height:9px;letter-spacing:-0.15px;color:#e8e8e8;-webkit-text-stroke:0.2px #e8e8e8">Default</div>
  <!-- bottom toolbar -->
  <svg class="a" style="left:0;top:124px" width="146" height="17" viewBox="527 201 146 17">
   <rect x="534.5" y="203.8" width="5" height="5" fill="none" stroke="#d0d0d0" stroke-width="0.9"/>
   <rect x="548.5" y="203.8" width="5" height="5" fill="#aaa" stroke="#777" stroke-width="0.6"/>
   <text x="561" y="209.5" font-family="Liberation Serif" font-style="italic" font-size="7.5" fill="#c8c8c8">fx</text>
   <rect x="567" y="208.5" width="2" height="0.8" fill="#c8c8c8"/>
   <circle cx="623.5" cy="206.5" r="2.6" fill="none" stroke="#c8c8c8" stroke-width="0.8"/>
   <path d="M621.8 204.8 L625.2 208.2" stroke="#c8c8c8" stroke-width="0.8"/>
   <rect x="636.5" y="204" width="5" height="5" fill="#aaa"/><rect x="638" y="203" width="4" height="3" fill="#ddd"/>
   <path d="M651 204.5 H656.5 M651.8 205 L652.3 209.5 H655.3 L655.8 205" fill="none" stroke="#999" stroke-width="0.9"/>
   <rect x="595" y="214" width="10" height="1.3" fill="#262626"/>
  </svg>
</div>
<!-- cursor -->
<svg class="a" style="left:624px;top:158px" width="10" height="13" viewBox="0 0 10 13"><path d="M1 1 L1 10.5 L3.3 8.5 L5 12 L6.6 11.3 L5 7.8 L8.2 7.8Z" fill="#111" stroke="#fff" stroke-width="0.8"/></svg>

</body></html>
